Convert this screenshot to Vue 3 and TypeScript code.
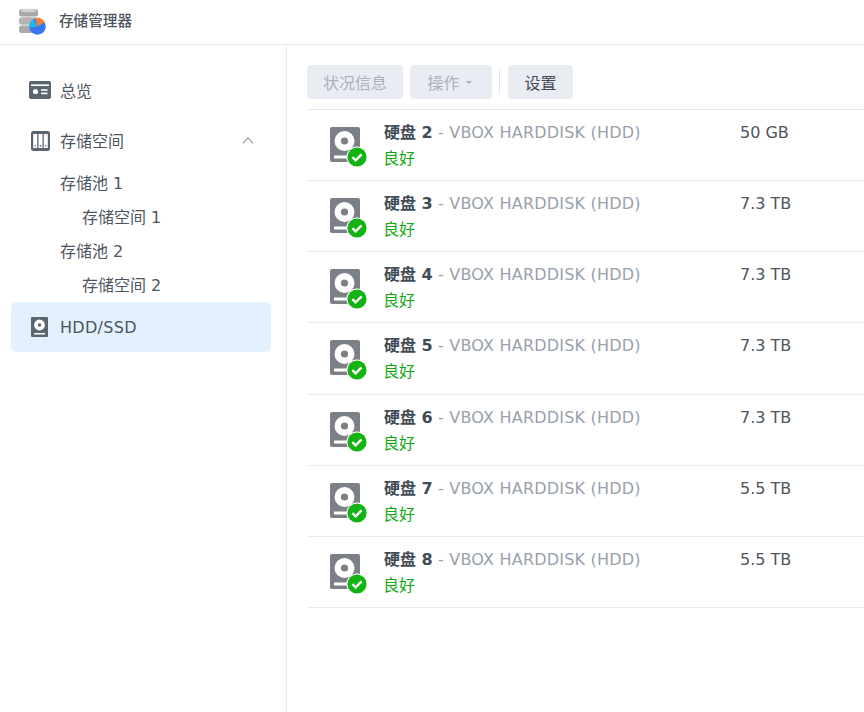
<script setup lang="ts">
interface Disk { id: number; size: string }
const disks: Disk[] = [
  { id: 2, size: '50 GB' },
  { id: 3, size: '7.3 TB' },
  { id: 4, size: '7.3 TB' },
  { id: 5, size: '7.3 TB' },
  { id: 6, size: '7.3 TB' },
  { id: 7, size: '5.5 TB' },
  { id: 8, size: '5.5 TB' },
]
</script>

<template>
  <div class="app">
    <header class="titlebar">
      <svg class="logo" width="32" height="32" viewBox="0 0 32 32">
        <rect x="3" y="4" width="19" height="7.5" rx="2.5" fill="#a9a9a9" />
        <rect x="3" y="12.2" width="19" height="7.5" rx="2.5" fill="#b4b4b4" />
        <rect x="3" y="20.4" width="19" height="7.5" rx="2.5" fill="#a9a9a9" />
        <ellipse cx="12.5" cy="5.5" rx="8" ry="1.8" fill="#d4d4d4" />
        <circle cx="21.5" cy="21.5" r="8.3" fill="#3b78f0" />
        <path d="M21.5 21.5 L17.5 14.2 A8.3 8.3 0 0 0 13.3 22.5 Z" fill="#27b5e8" />
        <path d="M21.5 21.5 L19 13.2 A8.3 8.3 0 0 1 28.5 17 Z" fill="#f0803a" />
      </svg>
      <span class="app-title">存储管理器</span>
    </header>
    <div class="body">
      <aside class="sidebar">
        <div class="nav-item top">
          <svg class="nav-icon" width="22" height="18" viewBox="0 0 22 18">
            <rect width="22" height="18" rx="2" fill="#5b6570" />
            <rect x="2" y="3.4" width="18" height="1.6" fill="#fff" />
            <circle cx="6.5" cy="10.5" r="2.6" fill="#fff" />
            <rect x="12" y="8.2" width="6.5" height="1.6" fill="#fff" />
            <rect x="12" y="11.6" width="6.5" height="1.6" fill="#fff" />
          </svg>
          <span>总览</span>
        </div>
        <div class="nav-item second">
          <svg class="nav-icon shift" width="19" height="20" viewBox="0 0 19 20">
            <rect width="19" height="20" rx="2.5" fill="#5b6570" />
            <rect x="2.2" y="3" width="4" height="14" fill="#fff" />
            <rect x="7.5" y="3" width="4" height="14" fill="#fff" />
            <rect x="12.8" y="3" width="4" height="14" fill="#fff" />
            <rect x="3.8" y="14" width="1" height="1.5" fill="#5b6570" />
            <rect x="8.7" y="14" width="1.6" height="1.5" fill="#5b6570" />
            <rect x="14.3" y="14" width="1" height="1.5" fill="#5b6570" />
          </svg>
          <span>存储空间</span>
          <svg class="chevron" width="12" height="7" viewBox="0 0 12 7">
            <path d="M.8 6.2 6 1l5.2 5.2" fill="none" stroke="#a4abb3" stroke-width="1.4" />
          </svg>
        </div>
        <div class="sub level1">存储池 1</div>
        <div class="sub level2">存储空间 1</div>
        <div class="sub level1">存储池 2</div>
        <div class="sub level2">存储空间 2</div>
        <div class="nav-item active">
          <svg class="nav-icon shift" width="17" height="20" viewBox="0 0 17 20">
            <rect width="17" height="20" rx="1" fill="#5b6570" />
            <circle cx="8.5" cy="8" r="5.4" fill="#fff" />
            <circle cx="8.5" cy="8" r="1.8" fill="#5b6570" />
            <rect x="3" y="16" width="11" height="1.5" fill="#fff" />
          </svg>
          <span>HDD/SSD</span>
        </div>
      </aside>
      <main class="content">
        <div class="toolbar">
          <button class="btn disabled wide" type="button">状况信息</button>
          <button class="btn disabled menu" type="button">操作<i class="caret"></i></button>
          <span class="divider"></span>
          <button class="btn settings" type="button">设置</button>
        </div>
        <ul class="list">
          <li v-for="d in disks" :key="d.id" class="row">
            <svg class="disk" width="38" height="42" viewBox="0 0 38 42">
              <rect x="0" y="0" width="30" height="35" rx="2" fill="#7b8087" />
              <circle cx="14.5" cy="14" r="10" fill="#fff" />
              <circle cx="14.5" cy="14" r="3.6" fill="#7b8087" />
              <rect x="4" y="28.5" width="18" height="3" fill="#fff" />
              <circle cx="27" cy="30" r="10.6" fill="#fff" />
              <circle cx="27" cy="30" r="9.6" fill="#12b312" />
              <path d="M22.4 30.2l3.2 3.2 6-6" fill="none" stroke="#fff" stroke-width="2.4" />
            </svg>
            <div class="info">
              <div class="name"><b>硬盘 {{ d.id }}</b><span class="model"> - VBOX HARDDISK (HDD)</span></div>
              <div class="status">良好</div>
            </div>
            <div class="size">{{ d.size }}</div>
          </li>
        </ul>
      </main>
    </div>
  </div>
</template>

<style>
html, body { background: #fff; }
</style>

<style scoped>
.app {
  width: 864px;
  height: 712px;
  overflow: hidden;
  background: #fff;
  color: #4d5560;
  font-family: "DejaVu Sans", "Noto Sans CJK SC", sans-serif;
  font-size: 16px;
  display: flex;
  flex-direction: column;
}
.titlebar {
  height: 44px;
  box-sizing: content-box;
  border-bottom: 1px solid #e6ebf1;
  display: flex;
  align-items: center;
  padding-left: 16px;
  flex: none;
}
.logo { margin-right: 11px; margin-top: -2px; }
.app-title { font-size: 14.6px; color: #4d5560; font-weight: 500; margin-top: -6px; }
.body { flex: 1; display: flex; min-height: 0; }
.sidebar {
  width: 286px;
  flex: none;
  box-sizing: content-box;
  border-right: 1px solid #e6ebf3;
  padding-top: 20px;
}
.nav-item {
  display: flex;
  align-items: center;
  height: 50px;
  margin: 0 15px 0 11px;
  padding-left: 18px;
  border-radius: 6px;
  position: relative;
}
.nav-item.second { margin-top: 1px; }
.nav-item.second span { margin-top: -2px; }
.nav-icon { flex: none; }
.nav-icon.shift { margin-left: 2px; }
.nav-item span { position: absolute; left: 49px; }
.chevron { position: absolute; right: 17px; top: 21px; }
.sub { height: 34px; line-height: 36px; }
.level1 { padding-left: 60px; }
.level2 { padding-left: 82px; }
.active { background: #e3f0fd; }
.active span { letter-spacing: .3px; }
.content { flex: 1; padding: 20px 0 0 20px; min-width: 0; }
.toolbar { display: flex; align-items: center; height: 34px; gap: 7px; }
.btn {
  height: 34px;
  border: 0;
  border-radius: 4px;
  background: #e9edf3;
  font: inherit;
  padding: 0;
  color: #414b55;
}
.wide { width: 96px; }
.menu { width: 82px; display: flex; align-items: center; justify-content: center; padding-right: 3px; box-sizing: border-box; }
.settings { width: 65px; margin-left: 1px; }
.disabled { color: #aab2bc; }
.caret {
  display: inline-block;
  margin-left: 6px;
  border: 3.5px solid transparent;
  border-top-color: #aab2bc;
  border-bottom: 0;
}
.divider { width: 1px; height: 24px; background: #e3e7ec; }
.list {
  list-style: none;
  margin: 10px 0 0;
  padding: 0;
  border-top: 1px solid #e3e9f0;
}
.row {
  height: 71.14px;
  box-sizing: border-box;
  border-bottom: 1px solid #e8ecf1;
  display: flex;
  align-items: flex-start;
  position: relative;
}
.disk { position: absolute; left: 23px; top: 17px; }
.info { margin-left: 77px; padding-top: 10px; width: 356px; }
.name { line-height: 26px; height: 26px; white-space: nowrap; }
.name b { font-weight: 700; color: #414b55; }
.model { color: #98a1ac; letter-spacing: .2px; }
.status { color: #12a812; line-height: 26px; margin-left: -1px; }
.size { padding-top: 10px; line-height: 26px; color: #4d5560; }
</style>
